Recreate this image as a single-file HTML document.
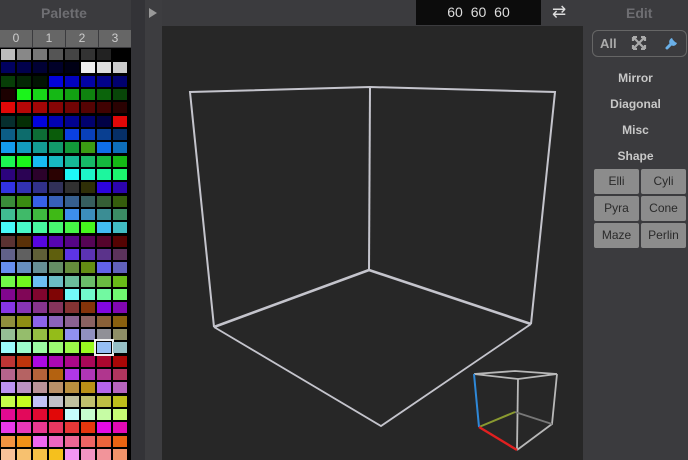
<!DOCTYPE html>
<html><head><meta charset="utf-8"><style>
*{margin:0;padding:0;box-sizing:border-box}
body{width:688px;height:460px;background:#3b3b3e;position:relative;overflow:hidden;font-family:"Liberation Sans",sans-serif}
.t{position:absolute;white-space:nowrap}
#grid{position:absolute;left:0;top:48px;width:131px;height:412px;background:#000;filter:saturate(0.85)}
.c{position:absolute;width:14px;height:11px}
.h{position:absolute;top:30px;height:17px;width:32px;background:#666;color:#ccc;font-size:12px;text-align:center;line-height:17px}
.btn{position:absolute;width:45px;height:25px;background:#8c8c8c;color:#2a2a2a;font-size:12px;text-align:center;line-height:25px;border-radius:2px}
.m{position:absolute;left:583px;width:105px;text-align:center;color:#c8c8c8;font-size:12px;font-weight:bold}
</style></head><body>
<div class="t" style="left:41px;top:5px;color:#6e6e72;font-size:14px;font-weight:bold">Palette</div>
<div class="h" style="left:0">0</div><div class="h" style="left:33px">1</div><div class="h" style="left:66px">2</div><div class="h" style="left:99px">3</div>
<div id="grid"></div>
<div style="position:absolute;left:131px;top:0;width:14px;height:460px;background:#333337"></div>
<div style="position:absolute;left:145px;top:0;width:17px;height:460px;background:#3d3d40"></div>
<svg style="position:absolute;left:148px;top:7px" width="10" height="12"><polygon points="1,1 9,6 1,11" fill="#999"/></svg>
<div style="position:absolute;left:162px;top:26px;width:421px;height:434px;background:#272727"></div>
<div style="position:absolute;left:416px;top:0;width:125px;height:25px;background:#0c0c0c;color:#ddd;font-size:14px;text-align:center;line-height:25px;word-spacing:4px">60 60 60</div>
<div class="t" style="left:552px;top:2px;color:#ddd;font-size:17px">⇄</div>
<div class="t" style="left:626px;top:5px;color:#6e6e72;font-size:14px;font-weight:bold">Edit</div>
<div style="position:absolute;left:592px;top:30px;width:95px;height:27px;border:1px solid #666;border-radius:6px"></div>
<div class="t" style="left:600px;top:36px;color:#aaa;font-size:13px;font-weight:bold">All</div>
<svg style="position:absolute;left:631px;top:36px" width="16" height="14"><path d="M2 1L14 13M14 1L2 13M2 1h4M2 1v4M14 1h-4M14 1v4M2 13h4M2 13v-4M14 13h-4M14 13v-4" stroke="#aaa" stroke-width="2.2" fill="none"/></svg>
<svg style="position:absolute;left:664px;top:35px" width="16" height="16"><path d="M3 13L9 7" stroke="#6ab0e8" stroke-width="3" stroke-linecap="round"/><path d="M8 3a4 4 0 1 0 5 5l-2-1-2-2z" fill="#6ab0e8"/></svg>
<div class="m" style="top:71px">Mirror</div>
<div class="m" style="top:97px">Diagonal</div>
<div class="m" style="top:123px">Misc</div>
<div class="m" style="top:149px">Shape</div>
<div class="btn" style="left:594px;top:169px">Elli</div><div class="btn" style="left:641px;top:169px">Cyli</div>
<div class="btn" style="left:594px;top:196px">Pyra</div><div class="btn" style="left:641px;top:196px">Cone</div>
<div class="btn" style="left:594px;top:223px">Maze</div><div class="btn" style="left:641px;top:223px">Perlin</div>
<svg style="position:absolute;left:0;top:0" width="688" height="460">
<g stroke="#c4c4cc" stroke-width="2" fill="none">
<polyline points="214,327 190,92 370,87 555,92 531,324"/>
<line x1="370" y1="87" x2="369" y2="270"/>
<polyline points="214,327 369,270 531,324" stroke-width="2.6"/>
<polyline points="214,327 381,426 531,324" stroke-width="1.8"/>
</g>
<g stroke="#b8b8b8" stroke-width="1.8" fill="none">
<polyline points="474,374 515,371 557,374 518,379 474,374"/>
<line x1="518" y1="379" x2="517" y2="450"/>
<polyline points="557,374 552,424 517,450"/>
<line x1="515" y1="412" x2="552" y2="424" stroke="#777"/>
</g>
<line x1="479" y1="427" x2="515" y2="412" stroke="#8a9a30" stroke-width="2"/>
<line x1="474" y1="374" x2="479" y2="427" stroke="#2e88d8" stroke-width="2"/>
<line x1="479" y1="427" x2="517" y2="450" stroke="#e02020" stroke-width="2.4"/>
</svg>
<script>
var P=[
"bbbbbb 888888 777777 555555 444444 333333 222222 000000",
"00006e 000058 00003c 000030 000018 eeeeee dddddd cccccc",
"004000 002800 001400 0000ff 0000dd 0000c0 0000a0 000080",
"200000 00ff00 00e000 00c000 00a800 008800 006800 004800",
"ff0000 d00000 b80000 980000 800000 600000 480000 300000",
"003030 003000 0000ff 0000d0 0000a8 000080 000050 ff0000",
"006090 007070 007030 006000 0040ff 0040d0 0040a0 003070",
"00a0ff 00a0c8 00a098 00a068 00a030 30a000 0070ff 0070c8",
"00ff40 00ff00 00c0ff 00c0c8 00c098 00c060 00c030 00c000",
"300090 300060 300030 300000 00ffff 00ffc8 00ff98 00ff60",
"3030ff 3030c8 303098 303060 303030 303000 3000ff 3000c8",
"309030 309000 3060ff 3060c8 306098 306060 306030 306000",
"30c090 30c060 30c030 30c000 3090ff 3090c8 309098 309060",
"30ffff 30ffc8 30ff98 30ff60 30ff30 30ff00 30c0ff 30c0c8",
"603030 603000 6000ff 6000c8 600098 600060 600030 600000",
"606090 606060 606030 606000 6030ff 6030c8 603098 603060",
"6090ff 6090c8 609098 609060 609030 609000 6060ff 6060c8",
"60ff30 60ff00 60c0ff 60c0c8 60c098 60c060 60c030 60c000",
"9000a0 900060 900030 900000 60ffff 60ffc8 60ff98 60ff60",
"9030ff 9030c8 903098 903060 903030 903000 9000ff 9000c8",
"909030 909000 9060ff 9060c8 906098 906060 906030 906000",
"90c090 90c060 90c030 90c000 9090ff 9090c8 909098 909060",
"90ffff 90ffc8 90ff98 90ff60 90ff30 90ff00 90c0ff 90c0c8",
"d03030 d03000 c000ff c000c8 c00098 c00060 c00030 c00000",
"c06090 c06060 c06030 c06000 c030ff c030c8 c03098 c03060",
"c090ff c090c8 c09098 c09060 c09030 c09000 c060ff c060c8",
"c0ff30 c0ff00 c0c0ff c0c0c8 c0c098 c0c060 c0c030 c0c000",
"ff00a0 ff0060 ff0030 ff0000 c0ffff c0ffc8 c0ff98 c0ff60",
"ff30ff ff30c8 ff3098 ff3060 ff3030 ff3000 ff00ff ff00c8",
"ff9030 ff9000 ff60ff ff60c8 ff6098 ff6060 ff6030 ff6000",
"ffc090 ffc060 ffc030 ffc000 ff90ff ff90c8 ff9098 ff9060"];
var g=document.getElementById('grid'),h='';
P.forEach(function(r,i){r.split(' ').forEach(function(c,j){
var y=Math.round(i*13.33)+1,x=j*16+1,s='';
if(i==22&&j==6)s='outline:2px solid #eee;outline-offset:1px;';
h+='<div class="c" style="left:'+x+'px;top:'+y+'px;background:#'+c+';'+s+'"></div>';});});
g.innerHTML=h;
</script>
</body></html>
